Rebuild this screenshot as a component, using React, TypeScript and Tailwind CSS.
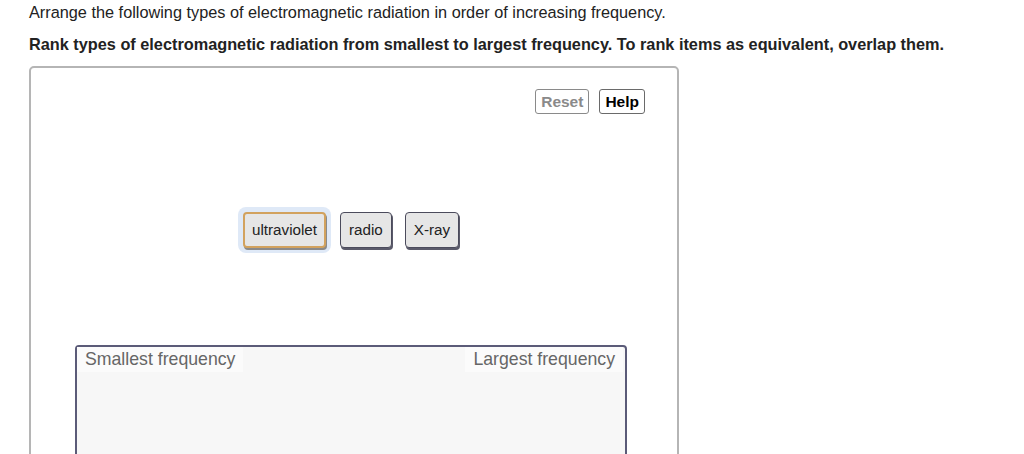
import React from 'react'

const items = [
  { label: 'ultraviolet', selected: true },
  { label: 'radio', selected: false },
  { label: 'X-ray', selected: false },
]

function Item({ label, selected }: { label: string; selected: boolean }) {
  if (selected) {
    return (
      <div className="rounded-[8px] bg-[#dfe9f7] p-[5px]">
        <div className="flex h-[36px] items-center rounded-[4px] border-2 border-[#d2a25e] bg-[#e6e6e6] px-[7px] text-[15.2px] text-[#222] shadow-[1px_2px_0_#8a8a8a]">
          {label}
        </div>
      </div>
    )
  }
  return (
    <div className="flex h-[36px] items-center rounded-[4px] border border-[#4b4b5c] bg-[#e6e6e6] px-[8px] text-[15.2px] text-[#222] shadow-[1px_2px_0_#5a5a6a]">
      {label}
    </div>
  )
}

export default function App() {
  return (
    <div className="h-[454px] overflow-hidden bg-white pl-[29px] font-['Liberation_Sans',Arial,sans-serif] text-[#222]">
      <p className="pt-[3px] text-[16.3px] leading-[18px]">
        Arrange the following types of electromagnetic radiation in order of increasing frequency.
      </p>
      <p className="mt-[14px] text-[16.3px] font-bold leading-[18px]">
        Rank types of electromagnetic radiation from smallest to largest frequency. To rank items as equivalent, overlap them.
      </p>
      <div className="mt-[13px] h-[420px] w-[650px] rounded-[5px] border-2 border-[#b5b5b5] bg-white">
        <div className="flex justify-end gap-[10px] pr-[32px] pt-[21px]">
          <button className="h-[25px] rounded-[3px] border border-[#8a8a8a] px-[5px] text-[15.5px] font-bold text-[#8a8a8a]">
            Reset
          </button>
          <button className="h-[25px] rounded-[3px] border border-[#6a6a6a] px-[5px] text-[15.5px] font-bold text-black">
            Help
          </button>
        </div>
        <div className="mt-[93px] flex items-center pl-[207px]">
          {items.map((it, i) => (
            <div key={it.label} className={i === 0 ? '' : i === 1 ? 'ml-[9px]' : 'ml-[13px]'}>
              <Item label={it.label} selected={it.selected} />
            </div>
          ))}
        </div>
        <div className="ml-[44px] mt-[92px] h-[200px] w-[552px] rounded-[4px] border-2 border-[#5b5b78] bg-[#f7f7f7]">
          <div className="flex justify-between">
            <span className="bg-[#fbfbfb] px-[8px] pt-[1px] pb-[2px] text-[17.7px] leading-[22px] text-[#666]">
              Smallest frequency
            </span>
            <span className="mr-[2px] bg-[#fbfbfb] px-[8px] pt-[1px] pb-[2px] text-[17.7px] leading-[22px] text-[#666]">
              Largest frequency
            </span>
          </div>
        </div>
      </div>
    </div>
  )
}
